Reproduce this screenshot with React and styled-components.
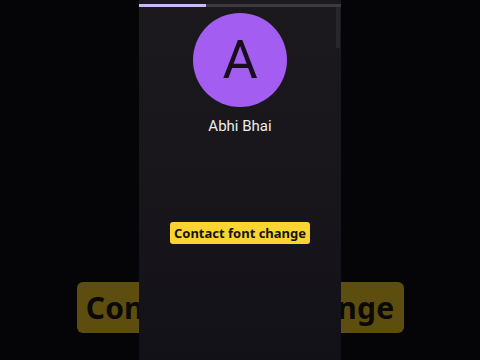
import React from "react";
import styled, { createGlobalStyle } from "styled-components";

const GlobalStyle = createGlobalStyle`
  html, body {
    margin: 0;
    padding: 0;
    background: #050507;
  }
  #root {
    width: 480px;
    height: 360px;
    overflow: hidden;
  }
`;

function App() {
  return (
    <>
      <GlobalStyle />
      <SStage>
        <SBackdrop>
          <SBigLabel>Contact font change</SBigLabel>
        </SBackdrop>
        <SPhone>
          <SProgress>
            <SProgressFill style={{ width: "33%" }} />
          </SProgress>
          <SScrollTrack />
          <SContact>
            <SAvatar>A</SAvatar>
            <SName>Abhi Bhai</SName>
          </SContact>
          <SCaption>Contact font change</SCaption>
        </SPhone>
      </SStage>
    </>
  );
}

export default App;

const SStage = styled.div`
  width: 480px;
  height: 360px;
  display: grid;
  grid-template: 1fr / 1fr;
  background: #050507;
  font-family: "Noto Sans", "Open Sans", sans-serif;
  & > * {
    grid-area: 1 / 1;
  }
`;

const SBackdrop = styled.div`
  display: flex;
  flex-flow: column nowrap;
  justify-content: flex-end;
  align-items: center;
  padding-bottom: 27px;
`;

const SBigLabel = styled.div`
  width: 327px;
  height: 51px;
  box-sizing: border-box;
  display: flex;
  align-items: center;
  justify-content: center;
  background: #5d4e0f;
  border-radius: 6px;
  color: #0b0906;
  font-family: "Noto Sans", sans-serif;
  font-weight: 700;
  font-size: 30px;
  letter-spacing: 0.2px;
  white-space: nowrap;
`;

const SPhone = styled.div`
  position: relative;
  justify-self: center;
  width: 202px;
  height: 360px;
  background: linear-gradient(180deg, #1b191d 0%, #18161b 55%, #121118 100%);
  display: flex;
  flex-flow: column nowrap;
  align-items: center;
`;

const SProgress = styled.div`
  align-self: stretch;
  height: 3px;
  margin-top: 4px;
  background: #3b3a3f;
  display: flex;
`;

const SProgressFill = styled.div`
  height: 100%;
  background: #cbb8f4;
`;

const SScrollTrack = styled.div`
  position: absolute;
  right: 1px;
  top: 7px;
  width: 4px;
  height: 41px;
  background: #27262b;
`;

const SContact = styled.div`
  display: flex;
  flex-flow: column nowrap;
  align-items: center;
  margin-top: 6px;
`;

const SAvatar = styled.div`
  width: 94px;
  height: 94px;
  border-radius: 50%;
  background: #a35ef1;
  color: #180e1f;
  display: flex;
  align-items: center;
  justify-content: center;
  font-family: Roboto, "Noto Sans", sans-serif;
  font-weight: 400;
  font-size: 54px;
  line-height: 1;
`;

const SName = styled.div`
  margin-top: 10px;
  color: #ececec;
  font-family: Roboto, "Noto Sans", sans-serif;
  font-size: 15px;
`;

const SCaption = styled.div`
  margin-top: 87px;
  height: 22px;
  padding: 0 4px;
  display: flex;
  align-items: center;
  background: #fbd42f;
  border-radius: 3px;
  color: #141210;
  font-family: "Noto Sans", sans-serif;
  font-weight: 700;
  font-size: 13px;
  white-space: nowrap;
`;
